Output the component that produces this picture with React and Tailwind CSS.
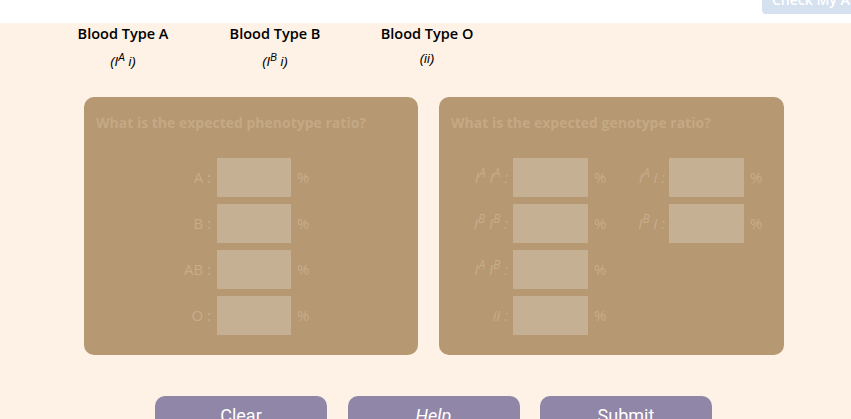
import React from "react";

const phenotypeRows = ["A", "B", "AB", "O"];

const sup = (base, s, size = "text-[10px]") => (
  <>
    {base}
    <sup className={`${size} relative -top-[0.55em] align-baseline`}>{s}</sup>
  </>
);

const g = (a, b) => (
  <>
    {sup("I", a, "text-[12px]")} {b === "i" ? "i" : sup("I", b, "text-[12px]")} :
  </>
);

const genotypeRows = [
  [g("A", "A"), g("A", "i")],
  [g("B", "B"), g("B", "i")],
  [g("A", "B"), null],
  [<>ii :</>, null],
];

function Box({ w = "w-[74px]" }) {
  return <div className={`${w} h-[39px] bg-[#c6b094] shrink-0`} />;
}

function Pct() {
  return <span className="ml-[6px] w-[14px] text-[15px] text-[#c8ad8a]">%</span>;
}

function GLabel({ children }) {
  return (
    <span className="w-[57px] text-right text-[15px] italic text-[#c8ad8a] whitespace-nowrap">
      {children}
    </span>
  );
}

export default function App() {
  return (
    <div
      className="w-[851px] h-[419px] overflow-hidden bg-[#fef1e6] flex flex-col"
      style={{ fontFamily: '"Open Sans", "Liberation Sans", sans-serif' }}
    >
      {/* top strip */}
      <div className="h-[23px] bg-white flex justify-end shrink-0">
        <div className="h-[14px] w-[89px] bg-[#d6e1ef] rounded-bl-[4px] overflow-hidden flex items-start pl-[10px]">
          <span className="text-white text-[14px] leading-[14px] -mt-[7px] font-semibold whitespace-nowrap">
            Check My Answer
          </span>
        </div>
      </div>

      {/* blood types */}
      <div className="flex pl-[47px] pt-[2px] text-black">
        {[
          ["Blood Type A", <>({sup("I", "A")} i)</>],
          ["Blood Type B", <>({sup("I", "B")} i)</>],
          ["Blood Type O", <>(ii)</>],
        ].map(([title, sub], i) => (
          <div key={i} className="w-[152px] flex flex-col items-center">
            <div className="text-[14.5px] leading-[18px] font-semibold">{title}</div>
            <div
              className={`${i === 2 ? "mt-[8px]" : "mt-[11px]"} text-[13px] leading-[16px] italic`}
              style={{ fontFamily: '"Liberation Sans", sans-serif' }}
            >
              {sub}
            </div>
          </div>
        ))}
      </div>

      {/* panels */}
      <div className="flex gap-[21px] pl-[84px] mt-[27px]">
        <div className="w-[334px] h-[258px] rounded-[10px] bg-[#b69873] pt-[17px] pl-[12px]">
          <div className="text-[14px] font-bold text-[#c4a985] leading-[18px]">
            What is the expected phenotype ratio?
          </div>
          <div className="mt-[26px] flex flex-col gap-[7px]">
            {phenotypeRows.map((r) => (
              <div key={r} className="flex items-center">
                <span className="w-[115px] text-right text-[15px] text-[#c8ad8a]">{r} :</span>
                <div className="ml-[6px]">
                  <Box />
                </div>
                <Pct />
              </div>
            ))}
          </div>
        </div>

        <div className="w-[345px] h-[258px] rounded-[10px] bg-[#b69873] pt-[17px] pl-[12px]">
          <div className="text-[14px] font-bold text-[#c4a985] leading-[18px]">
            What is the expected genotype ratio?
          </div>
          <div className="mt-[26px] flex flex-col gap-[7px]">
            {genotypeRows.map(([a, b], i) => (
              <div key={i} className="flex items-center">
                <GLabel>{a}</GLabel>
                <div className="ml-[5px]">
                  <Box w="w-[75px]" />
                </div>
                <Pct />
                {b && (
                  <>
                    <GLabel>{b}</GLabel>
                    <div className="ml-[4px]">
                      <Box w="w-[75px]" />
                    </div>
                    <Pct />
                  </>
                )}
              </div>
            ))}
          </div>
        </div>
      </div>

      {/* buttons */}
      <div
        className="flex pl-[155px] gap-[20.5px] mt-[41px]"
        style={{ fontFamily: 'Roboto, "Liberation Sans", sans-serif' }}
      >
        {["Clear", "Help", "Submit"].map((b) => (
          <div
            key={b}
            className={`w-[172px] h-[40px] shrink-0 rounded-[10px] bg-[#8f86a8] text-white text-[18px] leading-[22px] flex justify-center pt-[9px] ${b === "Help" ? "italic" : ""}`}
          >
            {b}
          </div>
        ))}
      </div>
    </div>
  );
}
